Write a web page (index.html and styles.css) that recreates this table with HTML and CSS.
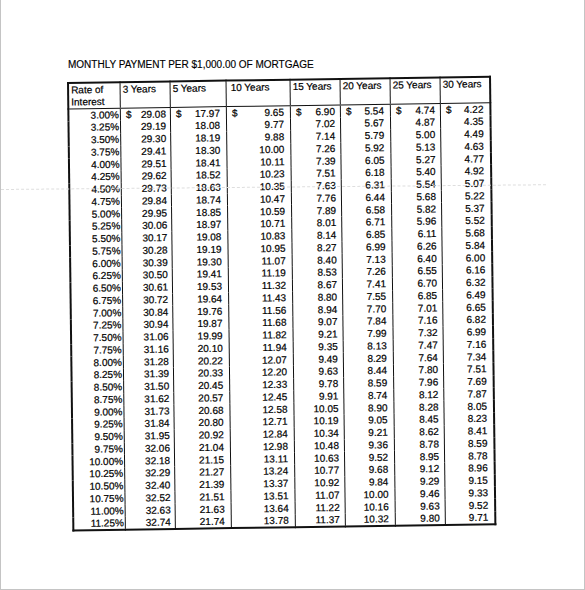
FILE: index.html
```html
<!DOCTYPE html>
<html>
<head>
<meta charset="utf-8">
<link rel="stylesheet" href="styles.css">
</head>
<body>
<div class="sheet">
  <div class="title">MONTHLY PAYMENT PER $1,000.00 OF MORTGAGE</div>
  <div class="scan">
  <table class="grid">
    <colgroup>
      <col class="c-rate"><col class="c-3"><col class="c-5"><col class="c-10"><col class="c-15"><col class="c-20"><col class="c-25"><col class="c-30">
    </colgroup>
    <thead>
      <tr>
        <th>Rate of<br>Interest</th>
        <th>3 Years</th>
        <th>5 Years</th>
        <th class="h-10">10 Years</th>
        <th>15 Years</th>
        <th>20 Years</th>
        <th>25 Years</th>
        <th>30 Years</th>
      </tr>
    </thead>
    <tbody>
      <tr><td>3.00%</td><td><span class="cur">$</span>29.08</td><td><span class="cur">$</span>17.97</td><td><span class="cur">$</span>9.65</td><td><span class="cur">$</span>6.90</td><td><span class="cur">$</span>5.54</td><td><span class="cur">$</span>4.74</td><td><span class="cur">$</span>4.22</td></tr>
      <tr><td>3.25%</td><td>29.19</td><td>18.08</td><td>9.77</td><td>7.02</td><td>5.67</td><td>4.87</td><td>4.35</td></tr>
      <tr><td>3.50%</td><td>29.30</td><td>18.19</td><td>9.88</td><td>7.14</td><td>5.79</td><td>5.00</td><td>4.49</td></tr>
      <tr><td>3.75%</td><td>29.41</td><td>18.30</td><td>10.00</td><td>7.26</td><td>5.92</td><td>5.13</td><td>4.63</td></tr>
      <tr><td>4.00%</td><td>29.51</td><td>18.41</td><td>10.11</td><td>7.39</td><td>6.05</td><td>5.27</td><td>4.77</td></tr>
      <tr><td>4.25%</td><td>29.62</td><td>18.52</td><td>10.23</td><td>7.51</td><td>6.18</td><td>5.40</td><td>4.92</td></tr>
      <tr><td>4.50%</td><td>29.73</td><td>18.63</td><td>10.35</td><td>7.63</td><td>6.31</td><td>5.54</td><td>5.07</td></tr>
      <tr><td>4.75%</td><td>29.84</td><td>18.74</td><td>10.47</td><td>7.76</td><td>6.44</td><td>5.68</td><td>5.22</td></tr>
      <tr><td>5.00%</td><td>29.95</td><td>18.85</td><td>10.59</td><td>7.89</td><td>6.58</td><td>5.82</td><td>5.37</td></tr>
      <tr><td>5.25%</td><td>30.06</td><td>18.97</td><td>10.71</td><td>8.01</td><td>6.71</td><td>5.96</td><td>5.52</td></tr>
      <tr><td>5.50%</td><td>30.17</td><td>19.08</td><td>10.83</td><td>8.14</td><td>6.85</td><td>6.11</td><td>5.68</td></tr>
      <tr><td>5.75%</td><td>30.28</td><td>19.19</td><td>10.95</td><td>8.27</td><td>6.99</td><td>6.26</td><td>5.84</td></tr>
      <tr><td>6.00%</td><td>30.39</td><td>19.30</td><td>11.07</td><td>8.40</td><td>7.13</td><td>6.40</td><td>6.00</td></tr>
      <tr><td>6.25%</td><td>30.50</td><td>19.41</td><td>11.19</td><td>8.53</td><td>7.26</td><td>6.55</td><td>6.16</td></tr>
      <tr><td>6.50%</td><td>30.61</td><td>19.53</td><td>11.32</td><td>8.67</td><td>7.41</td><td>6.70</td><td>6.32</td></tr>
      <tr><td>6.75%</td><td>30.72</td><td>19.64</td><td>11.43</td><td>8.80</td><td>7.55</td><td>6.85</td><td>6.49</td></tr>
      <tr><td>7.00%</td><td>30.84</td><td>19.76</td><td>11.56</td><td>8.94</td><td>7.70</td><td>7.01</td><td>6.65</td></tr>
      <tr><td>7.25%</td><td>30.94</td><td>19.87</td><td>11.68</td><td>9.07</td><td>7.84</td><td>7.16</td><td>6.82</td></tr>
      <tr><td>7.50%</td><td>31.06</td><td>19.99</td><td>11.82</td><td>9.21</td><td>7.99</td><td>7.32</td><td>6.99</td></tr>
      <tr><td>7.75%</td><td>31.16</td><td>20.10</td><td>11.94</td><td>9.35</td><td>8.13</td><td>7.47</td><td>7.16</td></tr>
      <tr><td>8.00%</td><td>31.28</td><td>20.22</td><td>12.07</td><td>9.49</td><td>8.29</td><td>7.64</td><td>7.34</td></tr>
      <tr><td>8.25%</td><td>31.39</td><td>20.33</td><td>12.20</td><td>9.63</td><td>8.44</td><td>7.80</td><td>7.51</td></tr>
      <tr><td>8.50%</td><td>31.50</td><td>20.45</td><td>12.33</td><td>9.78</td><td>8.59</td><td>7.96</td><td>7.69</td></tr>
      <tr><td>8.75%</td><td>31.62</td><td>20.57</td><td>12.45</td><td>9.91</td><td>8.74</td><td>8.12</td><td>7.87</td></tr>
      <tr><td>9.00%</td><td>31.73</td><td>20.68</td><td>12.58</td><td>10.05</td><td>8.90</td><td>8.28</td><td>8.05</td></tr>
      <tr><td>9.25%</td><td>31.84</td><td>20.80</td><td>12.71</td><td>10.19</td><td>9.05</td><td>8.45</td><td>8.23</td></tr>
      <tr><td>9.50%</td><td>31.95</td><td>20.92</td><td>12.84</td><td>10.34</td><td>9.21</td><td>8.62</td><td>8.41</td></tr>
      <tr><td>9.75%</td><td>32.06</td><td>21.04</td><td>12.98</td><td>10.48</td><td>9.36</td><td>8.78</td><td>8.59</td></tr>
      <tr><td>10.00%</td><td>32.18</td><td>21.15</td><td>13.11</td><td>10.63</td><td>9.52</td><td>8.95</td><td>8.78</td></tr>
      <tr><td>10.25%</td><td>32.29</td><td>21.27</td><td>13.24</td><td>10.77</td><td>9.68</td><td>9.12</td><td>8.96</td></tr>
      <tr><td>10.50%</td><td>32.40</td><td>21.39</td><td>13.37</td><td>10.92</td><td>9.84</td><td>9.29</td><td>9.15</td></tr>
      <tr><td>10.75%</td><td>32.52</td><td>21.51</td><td>13.51</td><td>11.07</td><td>10.00</td><td>9.46</td><td>9.33</td></tr>
      <tr><td>11.00%</td><td>32.63</td><td>21.63</td><td>13.64</td><td>11.22</td><td>10.16</td><td>9.63</td><td>9.52</td></tr>
      <tr><td>11.25%</td><td>32.74</td><td>21.74</td><td>13.78</td><td>11.37</td><td>10.32</td><td>9.80</td><td>9.71</td></tr>
    </tbody>
  </table>
  </div>
  <div class="scan-line"></div>
</div>
</body>
</html>
```

FILE: styles.css
```css
* { box-sizing: border-box; }
html, body { margin: 0; padding: 0; background: #fff; }
body { width: 585px; height: 590px; overflow: hidden; }

.sheet {
  position: relative;
  width: 585px;
  height: 590px;
  overflow: hidden;
  padding: 59px 0 0 66px;
  border-left: 1px solid #c4c4c4;
  border-right: 1px solid #c4c4c4;
  border-bottom: 1px solid #c4c4c4;
  font-family: "Liberation Sans", Arial, sans-serif;
  color: #000;
}

.title {
  font-size: 10px;
  line-height: 12px;
  padding-left: 1px;
  -webkit-text-stroke: 0.15px #000;
}

/* the scanned table is laid out at 2x and scaled down, with the slight tilt of the scan */
.scan {
  margin-top: 11px;
  width: 844px;
  transform-origin: 0 0;
  transform: matrix(0.5, -0.0075, 0.006, 0.5, 0, 0);
}

.grid {
  width: 844px;
  table-layout: fixed;
  border-collapse: collapse;
  border: 4px solid #111;
  font-size: 20px;
  -webkit-text-stroke: 0.4px #000;
}

.c-rate { width: 104px; }
.c-3 { width: 100px; }
.c-5 { width: 112px; }
.c-10 { width: 128px; }
.c-15, .c-20, .c-25, .c-30 { width: 100px; }

.grid th {
  height: 52px;
  padding: 0 0 0 4px;
  font-weight: normal;
  text-align: left;
  vertical-align: top;
  line-height: 24px;
  border-left: 2px solid #111;
  border-bottom: 2px solid #111;
  white-space: nowrap;
}
.grid th.h-10 { padding-left: 8px; }

.grid td {
  padding: 0 10px 0 0;
  height: 24.76px;
  line-height: 24px;
  text-align: right;
  border-left: 2px solid #111;
  white-space: nowrap;
}
.grid td:first-child { padding-right: 2px; }
.grid td:nth-child(2) { padding-right: 8px; }
.grid td:nth-child(3) { padding-right: 12px; }
.grid td:nth-child(4) { padding-right: 12px; }
.grid td:nth-child(6), .grid td:nth-child(8) { padding-right: 12px; }

.cur {
  float: left;
  margin-left: 10px;
}

.scan-line {
  position: absolute;
  left: 0;
  top: 189px;
  width: 545px;
  border-top: 1px dashed #dedede;
  transform-origin: 0 0;
  transform: rotate(-0.5deg);
  pointer-events: none;
}
```
